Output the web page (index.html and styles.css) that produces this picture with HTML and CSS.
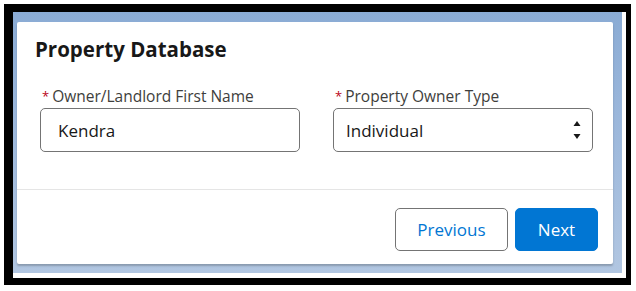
FILE: index.html
```html
<!DOCTYPE html>
<html>
<head>
<meta charset="utf-8">
<link rel="stylesheet" href="styles.css">
</head>
<body>
<div class="frame">
  <div class="backdrop">
    <div class="card">
      <div class="card-body">
        <h1 class="title">Property Database</h1>
        <div class="form-row">
          <div class="field">
            <label class="label"><span class="req">*</span>Owner/Landlord First Name</label>
            <div class="input">Kendra</div>
          </div>
          <div class="field">
            <label class="label"><span class="req">*</span>Property Owner Type</label>
            <div class="input select">
              <span>Individual</span>
              <svg class="arrows" width="8" height="22" viewBox="0 0 8 22">
                <path d="M4 2 L7.5 7 L0.5 7 Z" fill="#181818"/>
                <path d="M0.5 15 L7.5 15 L4 20 Z" fill="#181818"/>
              </svg>
            </div>
          </div>
        </div>
      </div>
      <div class="card-footer">
        <button class="btn btn-neutral">Previous</button>
        <button class="btn btn-brand">Next</button>
      </div>
    </div>
  </div>
</div>
</body>
</html>
```
FILE: styles.css
```css
html, body {
  margin: 0;
  padding: 0;
  background: #fff;
}
body {
  font-family: "Open Sans", "Noto Sans", sans-serif;
  width: 636px;
  height: 291px;
  overflow: hidden;
}
.frame {
  margin: 4px 0 0 4px;
  width: 609px;
  border-style: solid;
  border-color: #000;
  border-width: 8px 5px 7px 9px;
  padding: 0 4px 5px 0;
  background: #fff;
}
.backdrop {
  height: 261px;
  padding: 10px 9px 9px 4px;
  box-sizing: border-box;
  background: linear-gradient(180deg, #8aabd4 0%, #9bb7db 40%, #b1c6e1 100%);
}
.card {
  height: 242px;
  background: #fff;
  border-radius: 2px;
  box-shadow: 0 2px 2px rgba(0,0,0,0.22);
  display: flex;
  flex-direction: column;
}
.card-body {
  height: 168px;
  box-sizing: border-box;
  padding: 14px 20px 0 23px;
  border-bottom: 1px solid #e5e5e5;
}
.title {
  margin: 0 0 0 -5px;
  font-size: 20.5px;
  font-weight: 700;
  line-height: 26px;
  color: #181818;
}
.form-row {
  display: flex;
  gap: 33px;
  margin-top: 24px;
}
.field {
  width: 260px;
  display: flex;
  flex-direction: column;
}
.label {
  font-size: 15.5px;
  line-height: 20px;
  color: #3e3e3c;
  margin-bottom: 2px;
  padding-left: 2px;
}
.req {
  color: #ba0517;
  font-size: 13px;
  margin-right: 3px;
  vertical-align: top;
}
.input {
  height: 44px;
  box-sizing: border-box;
  border: 1px solid #747474;
  border-radius: 5px;
  padding: 0 17px;
  display: flex;
  align-items: center;
  font-size: 17px;
  color: #181818;
}
.select {
  justify-content: space-between;
  padding: 0 11px 0 12px;
}
.arrows {
  display: block;
}
.card-footer {
  display: flex;
  justify-content: flex-end;
  gap: 7px;
  padding: 18px 15px 0 0;
}
.btn {
  height: 43px;
  box-sizing: border-box;
  border-radius: 5px;
  font-family: inherit;
  font-size: 17px;
  padding: 0;
  cursor: pointer;
}
.btn-neutral {
  width: 113px;
  background: #fff;
  border: 1px solid #747474;
  color: #0176d3;
}
.btn-brand {
  width: 83px;
  background: #0176d3;
  border: 1px solid #0176d3;
  color: #fff;
}
```
